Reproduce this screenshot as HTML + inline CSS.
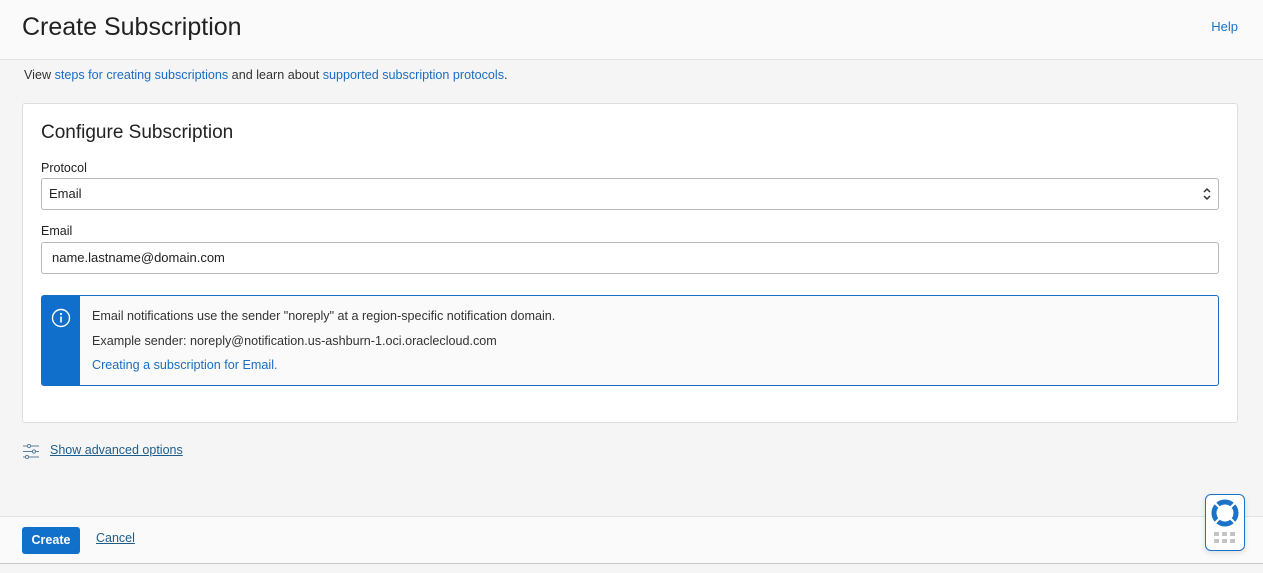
<!DOCTYPE html>
<html><head><meta charset="utf-8"><style>
*{box-sizing:border-box;margin:0;padding:0}
body{width:1263px;height:573px;background:#f5f5f5;font-family:"Liberation Sans",Arial,sans-serif;color:#161513;position:relative;overflow:hidden}
.hdr{position:absolute;left:0;top:0;width:1263px;height:60px;background:#fafafa;border-bottom:1px solid #e3e3e3}
.hdr h1{position:absolute;left:22px;top:13px;font-size:25px;font-weight:normal;color:#222}
.help{position:absolute;right:25px;top:19px;font-size:13px;color:#1a73c7}
a{color:#1a6dc3;text-decoration:none}
.intro{position:absolute;left:24px;top:68px;font-size:12.6px;color:#333}
.card{position:absolute;left:22px;top:103px;width:1216px;height:320px;background:#fff;border:1px solid #dedede;border-radius:3px}
.card h2{position:absolute;left:18px;top:18px;font-size:19px;font-weight:normal;color:#222}
.lbl{position:absolute;left:18px;font-size:12.5px;color:#222}
.inp{position:absolute;left:18px;width:1178px;height:32px;border:1px solid #b8b8b8;border-radius:3px;font-size:13px;padding:7px 0 0 7px;color:#222}
.info{position:absolute;left:18px;top:191px;width:1178px;height:91px;border:1px solid #1a6dc3;border-radius:3px;background:#fafafa}
.info .bar{position:absolute;left:0;top:0;width:38px;height:100%;background:#0f6fcb}
.info p{position:absolute;left:50px;font-size:12.6px;color:#333}
.adv{position:absolute;left:50px;top:443px;font-size:12.5px;color:#1f5c8a;text-decoration:underline}
.ftr{position:absolute;left:0;top:516px;width:1263px;height:48px;background:#fafafa;border-top:1px solid #e3e3e3;border-bottom:1px solid #c8c8c8}
.btn{position:absolute;left:22px;top:10px;width:58px;height:27px;background:#1070ca;color:#fff;font-size:12.5px;font-weight:bold;border-radius:3px;text-align:center;line-height:26px}
.cancel{position:absolute;left:96px;top:14px;font-size:12.5px;color:#1f5c8a;text-decoration:underline}
.life{position:absolute;left:1205px;top:494px;width:40px;height:57px;border:1.5px solid #1a73c7;border-radius:6px;background:#fff;box-shadow:0 2px 6px rgba(0,0,0,.12)}
</style></head><body>
<div class="hdr"><h1>Create Subscription</h1><a class="help">Help</a></div>
<div class="intro">View <a>steps for creating subscriptions</a> and learn about <a>supported subscription protocols</a>.</div>
<div class="card">
<h2>Configure Subscription</h2>
<div class="lbl" style="top:57px">Protocol</div>
<div class="inp" style="top:74px;padding-left:7px">Email
<svg style="position:absolute;right:6px;top:8px" width="10" height="14" viewBox="0 0 10 14"><path d="M2 5l3-3 3 3M2 9l3 3 3-3" fill="none" stroke="#333" stroke-width="1.5"/></svg></div>
<div class="lbl" style="top:120px">Email</div>
<div class="inp" style="top:138px;padding-left:10px">name.lastname@domain.com</div>
<div class="info"><div class="bar"><svg style="position:absolute;left:9px;top:12px" width="20" height="20" viewBox="0 0 20 20"><circle cx="10" cy="10" r="8.5" fill="none" stroke="#fff" stroke-width="1.4"/><circle cx="10" cy="6" r="1.1" fill="#fff"/><path d="M10 8.5v6" stroke="#fff" stroke-width="1.6"/></svg></div>
<p style="top:13px">Email notifications use the sender "noreply" at a region-specific notification domain.</p>
<p style="top:38px">Example sender: noreply@notification.us-ashburn-1.oci.oraclecloud.com</p>
<p style="top:62px"><a>Creating a subscription for Email.</a></p></div>
</div>
<svg style="position:absolute;left:23px;top:444px" width="16" height="15" viewBox="0 0 16 15"><g stroke="#5a7e96" stroke-width="1" fill="none"><path d="M0 2h4M8 2h8M0 7.5h9M13 7.5h3M0 13h2M6 13h10"/><circle cx="6" cy="2" r="1.6"/><circle cx="11" cy="7.5" r="1.6"/><circle cx="4" cy="13" r="1.6"/></g></svg>
<a class="adv">Show advanced options</a>
<div class="ftr"><div class="btn">Create</div><a class="cancel">Cancel</a></div>
<div class="life"><svg style="position:absolute;left:4px;top:3px" width="30" height="30" viewBox="0 0 30 30"><circle cx="15" cy="15" r="11" fill="none" stroke="#1a73c7" stroke-width="5"/><circle cx="15" cy="15" r="6" fill="#fff"/><g stroke="#fff" stroke-width="2.2"><path d="M5 5l6 6M25 5l-6 6M5 25l6-6M25 25l-6-6"/></g></svg>
<svg style="position:absolute;left:8px;top:37px" width="22" height="12"><g fill="#c4c4c4"><rect x="0" y="0" width="5" height="4"/><rect x="8" y="0" width="5" height="4"/><rect x="16" y="0" width="5" height="4"/><rect x="0" y="7" width="5" height="4"/><rect x="8" y="7" width="5" height="4"/><rect x="16" y="7" width="5" height="4"/></g></svg></div>
</body></html>
